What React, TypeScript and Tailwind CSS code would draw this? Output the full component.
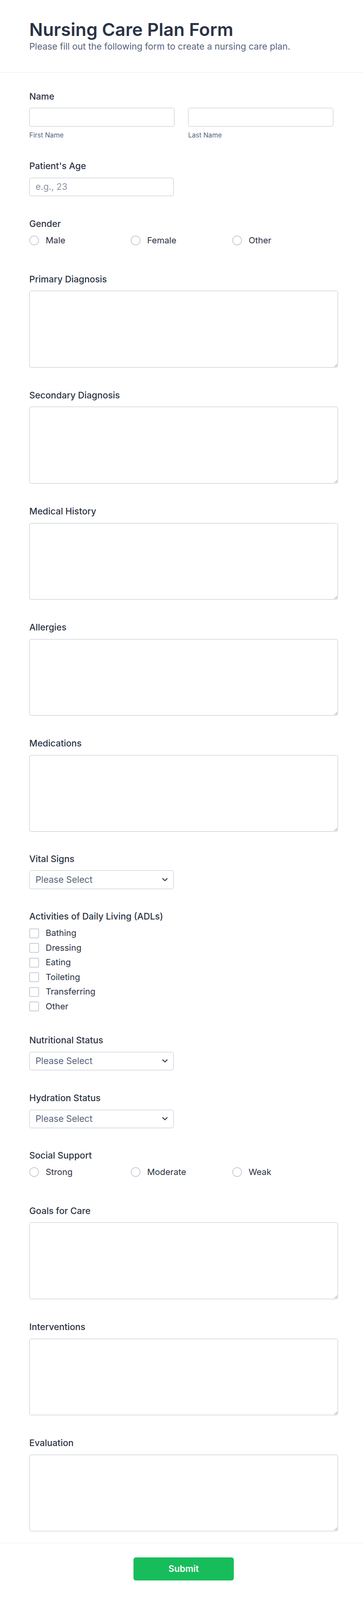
import type { ReactNode } from 'react'

// The sandbox window tops out at 4096px tall, so vertical spacing is the
// reference's spacing scaled by ~0.847 to keep the whole form (and Submit) in frame.

const textAreas1 = ['Primary Diagnosis', 'Secondary Diagnosis', 'Medical History', 'Allergies', 'Medications']
const textAreas2 = ['Goals for Care', 'Interventions', 'Evaluation']
const adls = ['Bathing', 'Dressing', 'Eating', 'Toileting', 'Transferring', 'Other']

function Label({ children }: { children: ReactNode }) {
  return <label className="block text-[22.9px] leading-[23.7px] font-medium text-[#2c3345]">{children}</label>
}

function TextAreaField({ label, className }: { label: string; className: string }) {
  return (
    <div className={className}>
      <Label>{label}</Label>
      <textarea className="mt-[16.9px] block w-[791px] h-[196.5px] rounded-[5px] border border-[#b9c0cd] bg-white px-[15px] py-3 text-[22.9px] outline-none" />
    </div>
  )
}

function SelectField({ label, className }: { label: string; className: string }) {
  return (
    <div className={className}>
      <Label>{label}</Label>
      <div className="relative mt-[16.9px] w-[370px]">
        <select className="block w-full h-[47.4px] appearance-none rounded-[5px] border border-[#b9c0cd] bg-white pl-[15px] pr-10 text-[22.9px] leading-[28px] text-[#57647e] outline-none">
          <option>Please Select</option>
        </select>
        <svg
          className="pointer-events-none absolute right-[15px] top-1/2 -translate-y-1/2"
          width="15"
          height="10"
          viewBox="0 0 15 10"
          fill="none"
        >
          <path d="M2 2.2 7.5 7.6 13 2.2" stroke="#3a4358" strokeWidth="2.6" strokeLinecap="round" strokeLinejoin="round" />
        </svg>
      </div>
    </div>
  )
}

function RadioGroup({ label, options, className }: { label: string; options: string[]; className: string }) {
  return (
    <div className={className}>
      <Label>{label}</Label>
      <div className="mt-[17.8px] flex">
        {options.map((o) => (
          <div key={o} className="flex w-[260px] items-center h-[23.7px]">
            <span className="block w-[25px] h-[25px] shrink-0 rounded-full border-2 border-[#c6ccd8] bg-white" />
            <span className="ml-[17px] text-[22px] leading-[23.7px] text-[#2c3345]">{o}</span>
          </div>
        ))}
      </div>
    </div>
  )
}

const inputCls =
  'block w-full h-[47.4px] rounded-[5px] border border-[#b9c0cd] bg-white px-[15px] text-[22.9px] text-[#2c3345] outline-none'

export default function App() {
  return (
    <div className="bg-white font-['Inter',sans-serif] text-[#2c3345]">
      <header className="pt-[52.5px] pb-[53.4px] pl-[75px] pr-[64px] border-b border-[#eceef4]">
        <h1 className="text-[45.8px] leading-[45.7px] font-semibold text-[#2c3345]">Nursing Care Plan Form</h1>
        <p className="mt-[9.3px] text-[22.9px] leading-[23.7px] text-[#57647e]">
          Please fill out the following form to create a nursing care plan.
        </p>
      </header>

      <form className="pt-[50px] pb-[29.6px] pl-[75px] pr-[64px]">
        {/* Name */}
        <div>
          <Label>Name</Label>
          <div className="mt-[16.9px] flex gap-[35px]">
            <div className="w-[372px]">
              <input className={inputCls} />
              <div className="mt-[13.6px] text-[17.2px] leading-[18.6px] text-[#57647e]">First Name</div>
            </div>
            <div className="w-[372px]">
              <input className={inputCls} />
              <div className="mt-[13.6px] text-[17.2px] leading-[18.6px] text-[#57647e]">Last Name</div>
            </div>
          </div>
        </div>

        {/* Age */}
        <div className="mt-[58.4px]">
          <Label>Patient's Age</Label>
          <div className="mt-[16.9px] w-[370px]">
            <input placeholder="e.g., 23" className={`${inputCls} placeholder:text-[#8d95a8]`} />
          </div>
        </div>

        <RadioGroup className="mt-[60.1px]" label="Gender" options={['Male', 'Female', 'Other']} />

        {textAreas1.map((t, i) => (
          <TextAreaField key={t} label={t} className={i === 0 ? 'mt-[76.2px]' : 'mt-[60.1px]'} />
        ))}

        <SelectField className="mt-[58.4px]" label="Vital Signs" />

        {/* ADLs */}
        <div className="mt-[59.3px]">
          <Label>Activities of Daily Living (ADLs)</Label>
          <div className="mt-[18.6px] flex flex-col gap-[13.8px]">
            {adls.map((a) => (
              <div key={a} className="flex items-center h-[23.7px]">
                <span className="block w-[25px] h-[25px] shrink-0 rounded-[3px] border-2 border-[#c6ccd8] bg-white" />
                <span className="ml-[17px] text-[22px] leading-[23.7px] text-[#2c3345]">{a}</span>
              </div>
            ))}
          </div>
        </div>

        <SelectField className="mt-[63.5px]" label="Nutritional Status" />
        <SelectField className="mt-[60.1px]" label="Hydration Status" />

        <RadioGroup className="mt-[59.3px]" label="Social Support" options={['Strong', 'Moderate', 'Weak']} />

        {textAreas2.map((t, i) => (
          <TextAreaField key={t} label={t} className={i === 0 ? 'mt-[76.2px]' : 'mt-[60.1px]'} />
        ))}
      </form>

      <footer className="border-t border-[#eceef4] pt-[36.4px] pb-[46px] pl-[75px] pr-[64px]">
        <div className="flex w-[791px] justify-center">
          <button
            type="button"
            className="w-[257px] h-[58.4px] rounded-[6px] bg-[#18bd5b] text-[22.9px] font-semibold text-white"
          >
            Submit
          </button>
        </div>
      </footer>
    </div>
  )
}
